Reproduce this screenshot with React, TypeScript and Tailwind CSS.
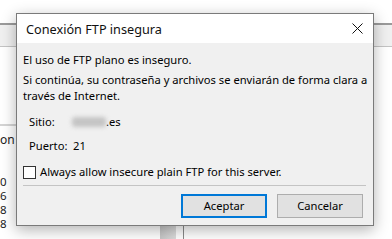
import React from 'react'

const font = { fontFamily: '"Noto Sans", "Segoe UI", Arial, sans-serif' }

function CloseIcon() {
  return (
    <svg width="11" height="11" viewBox="0 0 11 11" fill="none">
      <path d="M0.5 0.5 L10.5 10.5 M10.5 0.5 L0.5 10.5" stroke="#111" strokeWidth="1" />
    </svg>
  )
}

function Background() {
  return (
    <div className="flex h-full w-full flex-col bg-white" style={font}>
      <div className="h-[23px] bg-white" />
      <div className="h-[24px] border-t-2 border-b border-t-[#9a9a9a] border-b-[#c4c4c4] bg-[#f0f0f0]" />
      <div className="flex flex-1">
        <div className="flex w-[160px] flex-col pt-[77px] text-[12px] text-[#222]">
          <div className="h-[2px] bg-[#d4d4d4]" />
          <div className="mt-[6px] leading-[16px]">on</div>
          <div className="mt-[27px] flex flex-col text-[11.5px] leading-[14px]">
            <span>0</span>
            <span>6</span>
            <span>8</span>
            <span>8</span>
          </div>
        </div>
        <div className="w-[16px] bg-gradient-to-r from-[#c6c6c6] to-[#dcdcdc]" />
        <div className="w-[7px]" />
        <div className="flex-1 border-l border-[#8a8a8a]" />
      </div>
    </div>
  )
}

function Dialog() {
  return (
    <div
      className="absolute left-[16px] top-[13px] flex h-[213px] w-[358px] flex-col border border-[#7a7a7a] bg-[#f0f0f0] text-[11.2px] text-black shadow-[0_4px_14px_rgba(0,0,0,0.3)]"
      style={font}
    >
      <div className="flex h-[29px] items-center justify-between bg-white pl-[9px] pr-[10px]">
        <span className="text-[12.7px] leading-[16px] text-[#111]">Conexión FTP insegura</span>
        <CloseIcon />
      </div>
      <div className="flex flex-1 flex-col whitespace-nowrap px-[6px] pt-[9px]">
        <p className="leading-[16px]">El uso de FTP plano es inseguro.</p>
        <p className="mt-[4px] leading-[16px]">
          Si continúa, su contraseña y archivos se enviarán de forma clara a
          <br />
          través de Internet.
        </p>
        <div className="mt-[10px] grid grid-cols-[43px_auto] gap-y-[8px] pl-[6px] leading-[16px]">
          <span>Sitio:</span>
          <span className="flex items-center">
            <span className="inline-block h-[10px] w-[34px] rounded-[3px] bg-[#c4c4c4] blur-[2px]" />
            <span>.es</span>
          </span>
          <span>Puerto:</span>
          <span className="pl-[1px]">21</span>
        </div>
        <label className="mt-[10px] flex items-center gap-[4px] leading-[16px]">
          <span className="h-[13px] w-[13px] border border-[#333] bg-white" />
          <span>Always allow insecure plain FTP for this server.</span>
        </label>
        <div className="mt-[5px] mr-[1px] border-t border-[#c4c4c4]" />
        <div className="mt-[8px] flex justify-end gap-[10px] pr-[4px]">
          <button className="h-[24px] w-[86px] border-2 border-[#0078d7] bg-[#e1e1e1] leading-[16px]">
            Aceptar
          </button>
          <button className="h-[24px] w-[86px] border border-[#adadad] bg-[#e1e1e1] leading-[16px]">
            Cancelar
          </button>
        </div>
      </div>
    </div>
  )
}

export default function App() {
  return (
    <div className="relative h-[239px] w-[392px] overflow-hidden">
      <Background />
      <Dialog />
    </div>
  )
}
